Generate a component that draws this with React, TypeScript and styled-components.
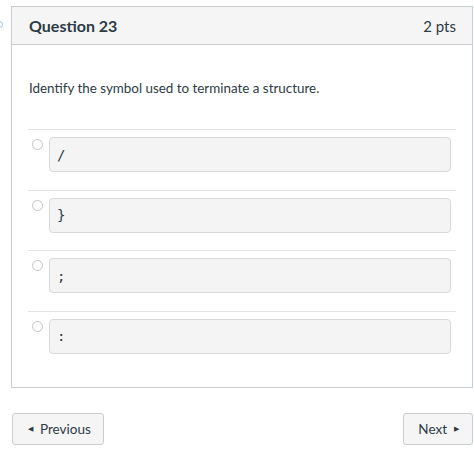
import styled, { createGlobalStyle } from "styled-components";

const Global = createGlobalStyle`
  body {
    margin: 0;
    background: #ffffff;
    font-family: Lato, "Noto Sans", sans-serif;
    color: #2d3b45;
  }
`;

const Page = styled.div`
  position: relative;
  padding: 6px 1px 0 11px;
  width: 474px;
  box-sizing: border-box;
`;

const Marker = styled.span`
  position: absolute;
  left: -4px;
  top: 21px;
  width: 7px;
  height: 7px;
  border: 1.5px solid #9ec3dc;
  border-radius: 50%;
  box-sizing: border-box;
`;

const Card = styled.div`
  border: 1px solid #c7cdd1;
  background: #ffffff;
`;

const Header = styled.div`
  display: flex;
  align-items: center;
  justify-content: space-between;
  height: 37px;
  padding: 0 16px 0 17px;
  background: #f5f5f5;
  border-bottom: 1px solid #c7cdd1;
`;

const Title = styled.h2`
  margin: 0;
  font-size: 16px;
  font-weight: 700;
  color: #2d3b45;
`;

const Points = styled.span`
  font-size: 15px;
  color: #2d3b45;
`;

const Body = styled.div`
  padding: 34px 16px 15px 16px;
`;

const Prompt = styled.p`
  margin: 0 0 32px 1px;
  font-size: 13.4px;
  line-height: 18px;
`;

const Answer = styled.label`
  display: flex;
  align-items: flex-start;
  border-top: 1px solid #e4e4e4;
  padding: 7px 5px 17.67px 4px;
`;

const Radio = styled.span`
  flex: none;
  width: 11px;
  height: 11px;
  margin-top: 2px;
  border: 1px solid #c4c4c4;
  border-radius: 50%;
  box-sizing: border-box;
  background: #ffffff;
`;

const Choice = styled.div`
  flex: 1;
  margin-left: 6px;
  height: 35px;
  box-sizing: border-box;
  display: flex;
  align-items: center;
  padding-left: 7px;
  background: #f4f4f4;
  border: 1px solid #d9d9d9;
  border-radius: 4px;
  font-family: "DejaVu Sans Mono", monospace;
  font-size: 14px;
  color: #2d3b45;
`;

const Footer = styled.div`
  display: flex;
  justify-content: space-between;
  margin-top: 25px;
  padding-left: 1px;
`;

const NavButton = styled.button<{ $right?: boolean }>`
  display: flex;
  align-items: center;
  gap: 7px;
  height: 32px;
  padding: ${(p) => (p.$right ? "0 13px 0 14px" : "0 12px 0 15px")};
  background: #f5f5f5;
  border: 1px solid #c7cdd1;
  border-radius: 3px;
  font-family: Lato, "Noto Sans", sans-serif;
  font-size: 13.5px;
  color: #2d3b45;
`;

const Arrow = styled.span`
  font-size: 7px;
  line-height: 1;
`;

const choices = ["/", "}", ";", ":"];

export default function App() {
  return (
    <Page>
      <Global />
      <Marker />
      <Card>
        <Header>
          <Title>Question 23</Title>
          <Points>2 pts</Points>
        </Header>
        <Body>
          <Prompt>Identify the symbol used to terminate a structure.</Prompt>
          {choices.map((c) => (
            <Answer key={c}>
              <Radio />
              <Choice>{c}</Choice>
            </Answer>
          ))}
        </Body>
      </Card>
      <Footer>
        <NavButton>
          <Arrow>◀</Arrow>
          Previous
        </NavButton>
        <NavButton $right>
          Next
          <Arrow>▶</Arrow>
        </NavButton>
      </Footer>
    </Page>
  );
}
